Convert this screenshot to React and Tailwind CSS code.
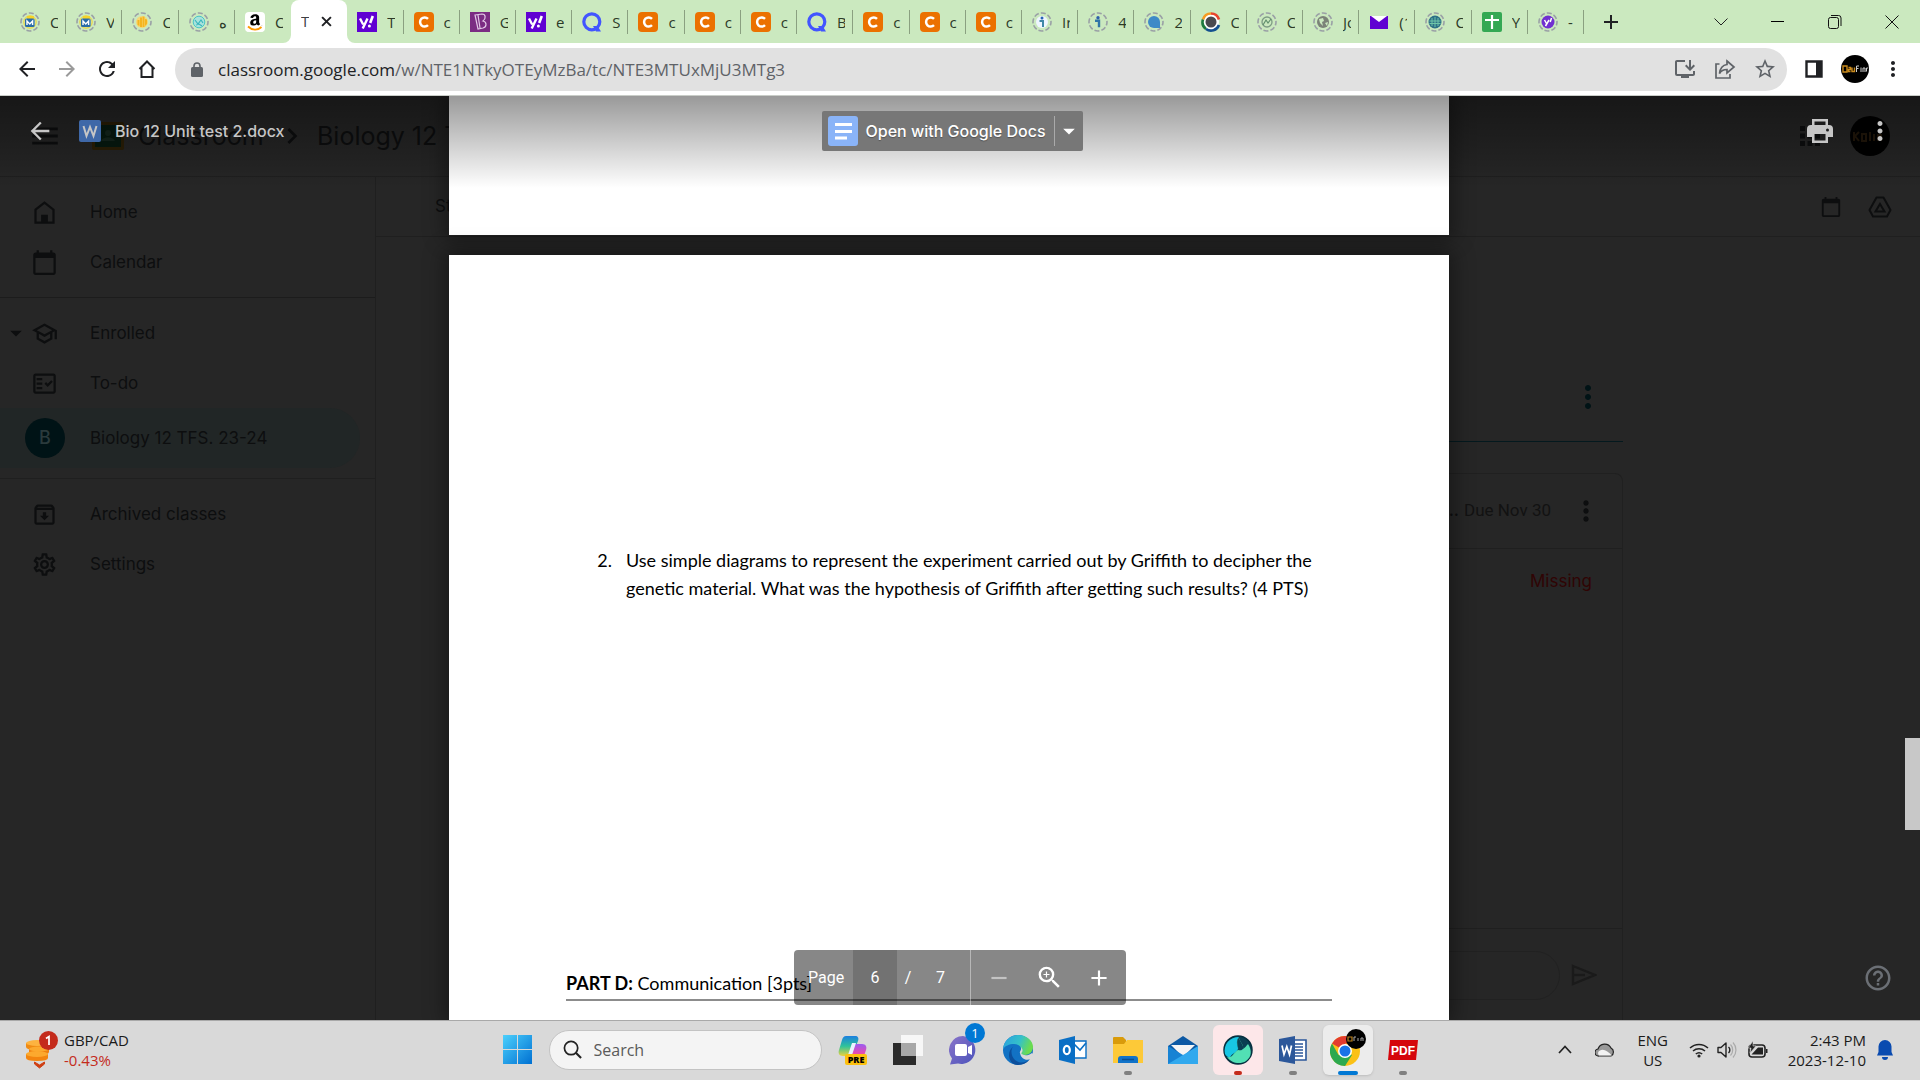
import React from "react";
import {
  MdArrowBack, MdArrowForward, MdRefresh, MdStarBorder, MdInstallDesktop, MdMoreVert,
  MdCalendarToday, MdOutlineSchool, MdOutlineFactCheck, MdOutlineArchive, MdOutlineSettings,
  MdArrowDropDown, MdApps, MdMenu, MdHelpOutline, MdZoomIn, MdAdd, MdRemove, MdChevronRight,
} from "react-icons/md";
import { FaAmazon } from "react-icons/fa";

/* ---------- Favicons ---------- */

function Ring({ children }) {
  return (
    <svg viewBox="0 0 20 20" className="size-5 shrink-0" aria-hidden="true">
      <circle cx="10" cy="10" r="9" fill="none" stroke="#9aa0a6" strokeWidth="1.6" strokeDasharray="5 2.07" strokeDashoffset="1.5" />
      {children}
    </svg>
  );
}

const favicons = {
  moodle: (
    <Ring>
      <path d="M7 4h7v3H7z" fill="#f5d327" />
      <circle cx="10" cy="10" r="6.2" fill="none" stroke="#f5d327" strokeWidth="1" />
      <rect x="5" y="6.5" width="9.6" height="8.5" rx="1.5" fill="#2a6ca8" />
      <path d="M7 13V9l2.8 3 2.8-3v4" fill="none" stroke="#fff" strokeWidth="1.4" />
    </Ring>
  ),
  hand: (
    <Ring>
      <circle cx="10" cy="10" r="6" fill="#f7d774" />
      <path d="M5.5 13V8h2v6zM8 15V5.5h2V15zM10.5 15V4.5h2V15zM13 14V7l2 .5V12z" fill="#f5b51f" />
    </Ring>
  ),
  teal: (
    <Ring>
      <circle cx="10" cy="10" r="5.8" fill="#a9e2dc" stroke="#49c5c5" strokeWidth="1" />
      <path d="M6 8l3 4 3-4 2 3M7 13l3-1 3 2" fill="none" stroke="#35b5bd" strokeWidth="1.1" />
    </Ring>
  ),
  amazon: (
    <span className="relative flex size-5 shrink-0 items-center justify-center rounded-sm bg-white">
      <FaAmazon className="size-[18px] text-black" />
      <svg viewBox="0 0 20 20" className="absolute inset-0 size-5"><path d="M2 13.5h16v6H2z" fill="#fff" /><path d="M3 14.5c4 4 10 4 13.5 .5" fill="none" stroke="#ff9900" strokeWidth="1.8" /></svg>
    </span>
  ),
  yahoo: (
    <svg viewBox="0 0 20 20" className="size-5 shrink-0"><path d="M0 0h20v20H0z" fill="#6001d2" /><path d="M3 6.5l3.2 6M10.5 6.5L5.7 16.5" stroke="#fff" strokeWidth="2.4" fill="none" /><path d="M15.8 4l-2.6 7" stroke="#fff" strokeWidth="2.6" /><circle cx="12.4" cy="14" r="1.5" fill="#fff" /></svg>
  ),
  chegg: (
    <svg viewBox="0 0 20 20" className="size-5 shrink-0"><rect width="20" height="20" rx="4" fill="#eb7100" /><path d="M14 6.8a4.6 4.6 0 1 0 0 6.4" fill="none" stroke="#fff" strokeWidth="2.5" /></svg>
  ),
  bar: (
    <svg viewBox="0 0 20 20" className="size-5 shrink-0"><path d="M0 0h20v20H0z" fill="#7b2c83" /><path d="M5 3l7-1c4 0 4 5 1 7 4 1 4 6 0 7l-5 1zM8 3l2 13" fill="none" stroke="#e3c9e8" strokeWidth="1.2" /></svg>
  ),
  quiz: (
    <svg viewBox="0 0 20 20" className="size-5 shrink-0"><circle cx="9.8" cy="9.8" r="8" fill="none" stroke="#4255ff" strokeWidth="3.2" /><path d="M11 14h4.5l3.5 5.5h-5z" fill="#4255ff" /></svg>
  ),
  infoA: (
    <Ring><circle cx="10" cy="10" r="6" fill="#eef5ff" /><circle cx="10" cy="6" r="1.5" fill="#2762b5" /><path d="M7.5 9h3.5v6" fill="none" stroke="#3f87a8" strokeWidth="2" /></Ring>
  ),
  infoB: (
    <Ring><circle cx="10" cy="5.8" r="1.7" fill="#2c5faa" /><path d="M7 8.8h4v6.5" fill="none" stroke="#3176a7" strokeWidth="2.4" /></Ring>
  ),
  blue: (<Ring><circle cx="10" cy="10" r="6" fill="#3d8ac7" /><path d="M10 10h6v6h-6z" fill="#3d8ac7" /></Ring>),
  color: (
    <svg viewBox="0 0 20 20" className="size-5 shrink-0"><circle cx="10" cy="10" r="8" fill="#fff" /><circle cx="10" cy="10" r="5.5" fill="#4a4a4f" /><path d="M10 1.5a8.5 8.5 0 0 1 8 6" fill="none" stroke="#e8452c" strokeWidth="2.6" /><path d="M10 1.5a8.5 8.5 0 0 0-8 6" fill="none" stroke="#f59b23" strokeWidth="2.6" /><path d="M2 7.5a8.5 8.5 0 0 0 3 9.5" fill="none" stroke="#1d7a3d" strokeWidth="2.6" /><path d="M5 17a8.5 8.5 0 0 0 13-4" fill="none" stroke="#14508f" strokeWidth="2.6" /></svg>
  ),
  pen: (<Ring><circle cx="10" cy="10" r="5" fill="none" stroke="#7d9c84" strokeWidth="1.3" /><path d="M6 13l3-5 2 3 3-4" fill="none" stroke="#5f8f6c" strokeWidth="1.2" /></Ring>),
  globe: (<Ring><circle cx="10" cy="10" r="6" fill="#7b8378" /><path d="M6 7l4-1 1 3-2 1 1 4-3-3zM12 11l3-1-1 4z" fill="#cbe9bf" /></Ring>),
  mail: (
    <svg viewBox="0 0 20 20" className="size-5 shrink-0"><path d="M1 4h18v13H1z" fill="#6001d2" /><path d="M2 4h16l-8 6z" fill="#fff" /></svg>
  ),
  cpr: (<Ring><circle cx="10" cy="10" r="6.5" fill="#2d7186" /><path d="M4.5 9h11M4.5 11.5h11M7 6v8M10 5v10M13 6v8" stroke="#6fc5a8" strokeWidth="1" /></Ring>),
  sheet: (
    <svg viewBox="0 0 20 20" className="size-5 shrink-0"><rect width="20" height="20" rx="2" fill="#34a853" /><path d="M10 3v14M3 8h14" stroke="#fff" strokeWidth="2.2" /></svg>
  ),
  ring: (<Ring><circle cx="10" cy="10" r="6.5" fill="#7130d1" /><path d="M6.5 8l2 3.5M11 8l-3.5 6M13.5 6l-1.3 4" stroke="#fff" strokeWidth="1.5" /></Ring>),
};

const tabsBefore = [["moodle", "C"], ["moodle", "V"], ["hand", "C"], ["teal", "ه"], ["amazon", "C"]];
const tabsAfter = [
  ["yahoo", "T"], ["chegg", "c"], ["bar", "G"], ["yahoo", "e"], ["quiz", "S"], ["chegg", "c"], ["chegg", "c"], ["chegg", "c"],
  ["quiz", "B"], ["chegg", "c"], ["chegg", "c"], ["chegg", "c"], ["infoA", "Ir"], ["infoB", "4"], ["blue", "2"], ["color", "C"],
  ["pen", "C"], ["globe", "Jo"], ["mail", "(1"], ["cpr", "C"], ["sheet", "Y"], ["ring", "-"],
];

function Tab({ icon, label, last }) {
  return (
    <button className={`flex h-6 min-w-0 grow basis-14 items-center gap-[10px] pl-[10px] ${last ? "" : "border-r border-[#8aa080]"}`}>
      {favicons[icon]}
      <span className="w-2 overflow-hidden whitespace-nowrap text-left text-[15px] leading-5 text-[#2c3a28]">{label}</span>
    </button>
  );
}

function Avatar({ size }) {
  return (
    <svg viewBox="0 0 28 28" className={size} aria-hidden="true">
      <circle cx="14" cy="14" r="14" fill="#000" />
      <path d="M2 11h4v6H2zM7.500 12.500h2v2h-2v2h2M11 12.500v4h2.500v-4" fill="none" stroke="#c98a1c" strokeWidth="1.400" />
      <path d="M15.500 17v-6h2.500M15.500 13.500h2M20 12.500V17M22 17v-4h2v4M27 13h-1.500v3.500" fill="none" stroke="#cfcfcf" strokeWidth="1" />
    </svg>
  );
}

function TabStrip() {
  return (
    <div className="flex h-[43px] items-center bg-[#cbe9bf]">
      <nav aria-label="Tabs" className="ml-[10px] flex h-full max-w-[1574px] flex-1 items-center">
        {tabsBefore.map(([i, l], k) => <Tab key={k} icon={i} label={l} last={k === 4} />)}
        <div className="relative flex h-full min-w-0 grow basis-14 items-center justify-between rounded-t-lg bg-white pl-[10px] pr-[15px]">
          <svg viewBox="0 0 8 8" className="absolute bottom-0 right-full size-2" aria-hidden="true"><path d="M8 0v8H0a8 8 0 0 0 8-8" fill="#fff" /></svg>
          <svg viewBox="0 0 8 8" className="absolute bottom-0 left-full size-2" aria-hidden="true"><path d="M0 0v8h8a8 8 0 0 1-8-8" fill="#fff" /></svg>
          <span className="w-2 overflow-hidden text-[15px] text-[#3c4043]">T</span>
          <button aria-label="Close tab">
            <svg viewBox="0 0 10 10" className="size-[11px]"><path d="M1 1l8 8M9 1l-8 8" stroke="#202124" strokeWidth="1.8" /></svg>
          </button>
        </div>
        {tabsAfter.map(([i, l], k) => <Tab key={k} icon={i} label={l} />)}
      </nav>
      <button aria-label="New tab" className="ml-[15px]"><MdAdd className="size-6 text-[#202124]" /></button>
      <div className="ml-auto flex h-9 items-center">
        <button aria-label="Search tabs" className="flex w-[57px] justify-center"><svg viewBox="0 0 14 8" className="h-2 w-[14px]"><path d="M.5 .5L7 7l6.5-6.5" fill="none" stroke="#222" /></svg></button>
        <button aria-label="Minimize" className="flex w-[57px] justify-center"><span className="h-px w-[13px] bg-black" /></button>
        <button aria-label="Restore" className="flex w-[57px] justify-center"><svg viewBox="0 0 14 14" className="size-[14px]"><rect x=".5" y="2.5" width="10" height="11" rx="2" fill="none" stroke="#111" /><path d="M3 .5h7.5a2.5 2.5 0 0 1 2.5 2.5v8" fill="none" stroke="#111" /></svg></button>
        <button aria-label="Close" className="flex w-[57px] justify-center"><svg viewBox="0 0 14 14" className="size-[14px]"><path d="M.5 .5l13 13M13.5 .5l-13 13" stroke="#111" /></svg></button>
      </div>
    </div>
  );
}

function AddressBar() {
  return (
    <div className="flex h-[53px] items-center border-b border-[#c9cdc8] bg-white px-[15px] text-[#202124]">
      <div className="flex items-center gap-4">
        <button aria-label="Back"><MdArrowBack className="size-6" /></button>
        <button aria-label="Forward"><MdArrowForward className="size-6 text-[#9a9a9a]" /></button>
        <button aria-label="Reload"><MdRefresh className="size-6" /></button>
        <button aria-label="Home"><svg viewBox="0 0 24 24" className="size-6"><path d="M4.500 12L12 4.500l7.500 7.500M6.500 10.500V20h11v-9.500" fill="none" stroke="currentColor" strokeWidth="2" /></svg></button>
      </div>
      <div className="ml-4 flex h-[43px] flex-1 items-center rounded-full bg-[#e1e1e1] pl-4 pr-[10px] text-[#5f6368]">
        <svg viewBox="0 0 12 15" className="h-[15px] w-3" aria-hidden="true"><rect y="5" width="12" height="10" rx="1.500" fill="currentColor" /><path d="M3 6V4a3 3 0 0 1 6 0v2" fill="none" stroke="currentColor" strokeWidth="1.600" /></svg>
        <div className="ml-[15px] flex-1 pt-px text-[17px] leading-6">
          <span className="text-[#202124]">classroom.google.com</span>/w/NTE1NTkyOTEyMzBa/tc/NTE3MTUxMjU3MTg3
        </div>
        <div className="flex items-center gap-4">
          <button aria-label="Install"><MdInstallDesktop className="size-6" /></button>
          <button aria-label="Share"><svg viewBox="0 0 24 24" className="size-6"><path d="M6.500 7H3v14h14v-4" fill="none" stroke="currentColor" strokeWidth="1.700" /><path d="M14 4l7 6-7 6v-3.500c-4 0-6 1.200-7.500 4C7 12 9 8.200 14 7.500z" fill="none" stroke="currentColor" strokeWidth="1.700" /></svg></button>
          <button aria-label="Bookmark"><MdStarBorder className="size-6" /></button>
        </div>
      </div>
      <div className="ml-[18px] flex items-center gap-3">
        <button aria-label="Side panel"><svg viewBox="0 0 18 18" className="size-[18px]"><path d="M1.500 1.500h15v15h-15z" fill="none" stroke="#202124" strokeWidth="2.400" /><path d="M11 1h6v16h-6z" fill="#202124" /></svg></button>
        <button aria-label="Profile" className="ml-[6px]"><Avatar size="size-7" /></button>
        <button aria-label="Menu"><MdMoreVert className="size-6" /></button>
      </div>
    </div>
  );
}

/* ---------- Classroom page behind the viewer ---------- */

function HomeIcon({ className }) {
  return (
    <svg viewBox="0 0 24 24" className={className} aria-hidden="true">
      <path d="M4 9.500L12 3.300l8 6.200V21H4z" fill="none" stroke="currentColor" strokeWidth="2" />
      <path d="M9 14h6v7H9z" fill="currentColor" />
    </svg>
  );
}

function SendIcon({ className }) {
  return (
    <svg viewBox="0 0 26 22" className={className} aria-hidden="true">
      <path d="M2 2l22 9-22 9z" fill="none" stroke="currentColor" strokeWidth="2.400" />
      <path d="M2 11h12" stroke="currentColor" strokeWidth="2.400" />
    </svg>
  );
}

function NavItem({ icon: Icon, label, caret }) {
  return (
    <a href="#" className="flex h-[50px] items-center">
      <span className="flex w-[31px] justify-center">{caret && <MdArrowDropDown className="size-7" />}</span>
      <Icon className="size-[27px]" />
      <span className="ml-8">{label}</span>
    </a>
  );
}

function DriveIcon() {
  return (
    <svg viewBox="0 0 24 24" className="size-6" aria-hidden="true">
      <path d="M8.500 2.500h7L22.500 15l-3.500 6.500H5L1.500 15z" fill="none" stroke="currentColor" strokeWidth="2" strokeLinejoin="round" />
      <path d="M12 9l4.500 7.500h-9z" fill="none" stroke="currentColor" strokeWidth="2" />
    </svg>
  );
}

function Classroom() {
  return (
    <div className="flex min-h-0 flex-1 flex-col bg-[#262626] font-['Inter',sans-serif] text-[#0d0e0f]">
      <header className="flex h-[81px] shrink-0 items-center border-b border-[#1f1f1f] pl-7 pr-[30px] text-[25px] leading-8">
        <MdMenu className="size-[34px]" />
        <svg viewBox="0 0 32 28" className="ml-[30px] h-7 w-8"><rect width="32" height="28" rx="2" fill="#2b1f06" /><path d="M3 3h26v22H3z" fill="#061a10" /><circle cx="16" cy="11" r="3" fill="#15271e" /><path d="M9 19c2-5 12-5 14 0z" fill="#15271e" /></svg>
        <span className="ml-[14px] w-[130px] whitespace-nowrap">Classroom</span>
        <MdChevronRight className="ml-2 size-8" />
        <span className="ml-[9px] whitespace-nowrap">Biology 12 TFS. 23-24</span>
        <MdApps className="ml-auto size-[30px]" />
        <svg viewBox="0 0 40 40" className="ml-[25px] size-10"><circle cx="20" cy="20" r="20" fill="#000" /><path d="M4 16v9M9 16l-4 4 4 5M12 18h4v7h-4zM20 16v9M24 18v7M28 25v-6h3v6" fill="none" stroke="#22170a" strokeWidth="2" /></svg>
      </header>
      <div className="flex min-h-0 flex-1">
        <nav aria-label="Classroom" className="w-[376px] shrink-0 border-r border-[#1f1f1f] text-[17px] leading-6">
          <div className="border-b border-[#1c1c1c] py-[10px]">
            <NavItem icon={HomeIcon} label="Home" />
            <NavItem icon={MdCalendarToday} label="Calendar" />
          </div>
          <div className="border-b border-[#1f1f1f] py-[10px]">
            <NavItem icon={MdOutlineSchool} label="Enrolled" caret />
            <NavItem icon={MdOutlineFactCheck} label="To-do" />
            <a href="#" className="mr-[15px] flex h-[60px] items-center rounded-r-full bg-[#212626] pl-[25px]">
              <span className="flex size-10 items-center justify-center rounded-full bg-[#001316] text-[18px] font-medium text-[#2a3a3c]">B</span>
              <span className="ml-[25px]">Biology 12 TFS. 23-24</span>
            </a>
          </div>
          <div className="py-[10px]">
            <NavItem icon={MdOutlineArchive} label="Archived classes" />
            <NavItem icon={MdOutlineSettings} label="Settings" />
          </div>
        </nav>
        <div className="flex min-w-0 flex-1 flex-col">
          <div className="flex h-[60px] shrink-0 items-center gap-[26px] border-b border-[#1f1f1f] pl-[59px] pr-7 text-[17px]">
            <span className="mr-auto">Stream</span>
            <MdCalendarToday className="size-[22px]" />
            <DriveIcon />
          </div>
          <div className="flex min-h-0 flex-1 justify-center overflow-hidden pr-4">
            <section className="flex w-[966px] flex-col">
              <div className="flex h-[205px] shrink-0 justify-end border-b border-[#04191e] pr-[17px] pt-[142px]">
                <MdMoreVert className="size-9 text-[#001316]" />
              </div>
              <article className="mt-[31px] flex flex-1 flex-col rounded-t-lg border border-b-0 border-[#202020]">
                <div className="flex h-[75px] items-center justify-end border-b border-[#1f1f1f] pr-5">
                  <span className="text-[17px] font-medium">Bio 12 Unit test paper...</span>
                  <span className="ml-[5px] font-['Roboto',sans-serif] text-[17px] text-[#121212]">Due Nov 30</span>
                  <MdMoreVert className="ml-[19px] size-8" />
                </div>
                <p className="flex-1 pr-[30px] pt-5 text-right text-[17px] leading-6 text-[#300404]">Missing</p>
                <div className="flex h-[92px] items-start border-t border-[#1f1f1f] pr-[25px] pt-[22px]">
                  <div className="h-[49px] flex-1 rounded-full border border-[#212121]" />
                  <SendIcon className="ml-[11px] mt-[13px] h-[22px] w-[26px] text-[#1a1a1a]" />
                </div>
              </article>
            </section>
          </div>
        </div>
      </div>
    </div>
  );
}

/* ---------- Document viewer ---------- */

function PrintIcon({ className }) {
  return (
    <svg viewBox="0 0 26 24" className={className} aria-hidden="true">
      <path fillRule="evenodd" d="M5 0h16v6h1a4 4 0 0 1 4 4v8h-5v6H5v-6H0v-8a4 4 0 0 1 4-4h1zM7.500 2.500V6h11V2.500zM7.500 15v6.500h11V15zM20.500 9.500a1.500 1.500 0 1 0 0 3 1.500 1.500 0 0 0 0-3z" fill="currentColor" />
    </svg>
  );
}

function Viewer() {
  return (
    <div className="absolute inset-0 flex flex-col">
      <div className="flex min-h-0 flex-1 flex-col items-center gap-5 overflow-hidden pr-[22px] font-['Lato',sans-serif] text-[18px] leading-7 text-black">
        <div className="h-[139px] w-[1000px] shrink-0 bg-white shadow-[0_0_20px_4px_rgba(0,0,0,0.4)]" />
        <div className="flex w-[1000px] flex-1 flex-col bg-white px-[117px] shadow-[0_0_20px_4px_rgba(0,0,0,0.4)]">
          <ol start="2" className="ml-[60px] mt-[291px] list-none">
            <li className="relative whitespace-nowrap">
              <span className="absolute right-full mr-[14px]">2.</span>
              Use simple diagrams to represent the experiment carried out by Griffith to decipher the
              <br />
              genetic material. What was the hypothesis of Griffith after getting such results? (4 PTS)
            </li>
          </ol>
          <h2 className="mb-[19px] mt-auto border-b-2 border-[#8c8c8c] pb-[2px] font-normal"><b>PART D:</b> Communication [3pts]</h2>
        </div>
      </div>

      <div className="absolute inset-x-0 top-0 grid h-[92px] grid-cols-[1fr_auto_1fr] items-start bg-linear-to-b from-black/40 to-transparent pr-[15px] pt-[15px] font-['Inter',sans-serif] text-[#c6c6c6]">
        <div className="flex h-10 items-center pl-[26px]">
          <button aria-label="Close viewer"><MdArrowBack className="size-7" /></button>
          <svg viewBox="0 0 22 22" className="ml-[25px] size-[22px]"><rect width="22" height="22" rx="2" fill="#3f68a8" /><path d="M4.500 6l3 10L11 7l3.500 9 3-10" fill="none" stroke="#c6c6c6" strokeWidth="2" /></svg>
          <span className="ml-[14px] text-[16px] font-medium leading-6">Bio 12 Unit test 2.docx</span>
        </div>
        <div className="flex h-10 items-center rounded-xs bg-[#777] text-white">
          <button className="flex items-center gap-[7px] pl-[6px]">
            <svg viewBox="0 0 30 30" className="size-[30px]"><rect width="30" height="30" rx="3" fill="#8ab4f8" /><path d="M7 8.500h17M7 15.500h17M7 22h12" stroke="#fff" strokeWidth="3" /></svg>
            <span className="text-[16px] font-medium leading-6 [text-shadow:0_1px_1px_rgba(0,0,0,0.3)]">Open with Google Docs</span>
          </button>
          <span className="ml-2 h-[30px] w-px bg-[#aaa]" />
          <button aria-label="Choose app"><MdArrowDropDown className="size-7" /></button>
        </div>
        <div className="flex h-10 items-center justify-end gap-8 pr-[10px]">
          <button aria-label="Print"><PrintIcon className="h-6 w-[26px]" /></button>
          <button aria-label="More actions"><MdMoreVert className="size-[30px]" /></button>
        </div>
      </div>

      <div className="pointer-events-none absolute inset-x-0 bottom-[15px] flex justify-center font-['Roboto',sans-serif] text-white">
        <div className="flex h-[55px] items-center rounded-sm bg-black/47 text-[16px]">
          <label htmlFor="page" className="w-[59px] pl-[14px]">Page</label>
          <input id="page" defaultValue="6" className="h-full w-11 bg-black/15 text-center" />
          <span className="w-[22px] text-center">/</span>
          <span className="w-[51px] pl-[17px]">7</span>
          <span className="h-full w-px bg-white/40" />
          <button aria-label="Zoom out" className="flex w-[56px] justify-center text-white/50"><MdRemove className="size-[26px]" /></button>
          <button aria-label="Fit" className="flex w-11 justify-center"><MdZoomIn className="size-[29px]" /></button>
          <button aria-label="Zoom in" className="flex w-[55px] justify-center"><MdAdd className="size-[26px]" /></button>
        </div>
      </div>
      <button aria-label="Help" className="absolute bottom-[27px] right-[27px] text-[#6b6f75]"><MdHelpOutline className="size-[30px]" /></button>
      <div className="absolute right-0 top-[69.5%] h-[92px] w-[15px] bg-[#c8c8c8]" />
    </div>
  );
}

/* ---------- Taskbar ---------- */

const apps = [
  { name: "Copilot", art: (
    <svg viewBox="0 0 30 32" className="h-8 w-[30px]"><defs><linearGradient id="cpa" x1="0" y1="0" x2="0" y2="1"><stop stopColor="#1b7fe0" /><stop offset=".5" stopColor="#2fc39a" /><stop offset="1" stopColor="#f3d33b" /></linearGradient><linearGradient id="cpb" x1="0" y1="0" x2="0" y2="1"><stop stopColor="#9a5cf0" /><stop offset=".6" stopColor="#e84bb0" /><stop offset="1" stopColor="#f58a4a" /></linearGradient></defs><path d="M8 2h9c3 0 4 2 3 5l-5 13c-1 2-3 3-5 2H5c-4 0-5-3-4-6L4 6c1-3 2-4 4-4z" fill="url(#cpa)" /><path d="M17 10h7c4 0 5 3 4 6l-2 6c-1 3-3 4-5 4h-9z" fill="url(#cpb)" /><path d="M14 9h4l-4 12h-4z" fill="#e9f2ff" /><rect x="7" y="20" width="22" height="11" rx="2" fill="#fcc10f" /><text x="18" y="29" textAnchor="middle" fontSize="9" fontWeight="800" fontFamily="Open Sans">PRE</text></svg>) },
  { name: "Task view", art: (
    <svg viewBox="0 0 30 30" className="size-[30px]"><path d="M0 8h23v22H0z" fill="#2b2b2b" /><path d="M8 0h22v21H8z" fill="#fff" opacity=".78" /><path d="M8 8h15v13H8z" fill="#a8a8a8" /></svg>) },
  { name: "Chat", badge: "1", art: (
    <svg viewBox="0 0 28 30" className="h-[30px] w-7"><defs><linearGradient id="cht" x1="0" y1="0" x2="1" y2="1"><stop stopColor="#8a74c9" /><stop offset="1" stopColor="#4b53bc" /></linearGradient></defs><path d="M14 1a14 14 0 1 1-5 27.500l-8 1 2-6A14 14 0 0 1 14 1z" fill="url(#cht)" /><rect x="6" y="9" width="12" height="12" rx="2" fill="#fff" /><path d="M19 12l4-2v10l-4-2z" fill="#fff" /></svg>) },
  { name: "Edge", art: (
    <svg viewBox="0 0 30 30" className="size-[30px]"><defs><linearGradient id="eda" x1="0" y1="0" x2="1" y2=".3"><stop stopColor="#2a9fe0" /><stop offset=".6" stopColor="#35c1c9" /><stop offset="1" stopColor="#6bdc4f" /></linearGradient></defs><circle cx="15" cy="15" r="15" fill="#1272c4" /><path d="M0 14C1 5 8 0 15 0c9 0 15 6 15 12 0 5-4 8-8 8-3 0-5-1-5-2s2-2 1-5c-1-3-4-4-7-4-5 0-9 2-11 5z" fill="url(#eda)" /><path d="M11 11c-4 3-3 10 1 14 5 4 11 3 15-1-2 3-7 6-12 6-6 0-9-5-9-10 0-4 2-7 5-9z" fill="#0c4f9c" /><path d="M17 18c-1-1 2-3 1-6 2 2 2 5 0 6 1 2 6 4 11 0l3 3-4 3c-5 2-10 0-11-6z" fill="#d9d9d9" /></svg>) },
  { name: "Outlook", art: (
    <svg viewBox="0 0 28 28" className="size-7"><path d="M13 5h14v17H13z" fill="#fff" stroke="#0a6fc5" strokeWidth="1.400" /><path d="M14 7l7 7 6-7" fill="none" stroke="#0a6fc5" strokeWidth="1.600" /><path d="M0 4l16-4v28L0 24z" fill="#0a6fc5" /><ellipse cx="7.800" cy="14" rx="3" ry="4.200" fill="none" stroke="#fff" strokeWidth="2.200" /></svg>) },
  { name: "Files", dot: "bg-[#808080]", wide: "w-2", art: (
    <svg viewBox="0 0 30 28" className="h-7 w-[30px]"><path d="M0 2q0-1 1-1h9l3 3v6H0z" fill="#d99b0b" /><path d="M0 8h11l3-4h16v23H0z" fill="#fdc938" /><path d="M5 27v-4q0-3 3-3h14q3 0 3 3v4z" fill="#1173c9" /><path d="M9 23.500h12" stroke="#0a4f91" strokeWidth="1.500" /></svg>) },
  { name: "Mail", art: (
    <svg viewBox="0 0 30 28" className="h-7 w-[30px]"><path d="M0 10L15 0l15 10v18H0z" fill="#0c59a4" /><path d="M3 9h24L15 21z" fill="#f4f4f4" /><path d="M0 10l30 18H0z" fill="#1783d4" /><path d="M30 10v18H0z" fill="#31a9ee" /></svg>) },
  { name: "GitKraken", tile: "bg-[#fde7e9]", dot: "bg-[#c42b1c]", wide: "w-2", art: (
    <svg viewBox="0 0 30 30" className="size-[30px]"><circle cx="15" cy="15" r="14" fill="#0a3f52" stroke="#06303f" strokeWidth="1.500" /><path d="M2 19C0 9 7 2 16 2c-4 5-1 8-1 12-2 5-7 4-8 9-2-1-4-2-5-4z" fill="#18c5e3" /><path d="M4 22c5 2 7-5 11-7 1-5-3-8 1-12 1 4 5 7 4 11 2-1 3-3 5-5 4 6 4 13-2 17-6 4-15 2-19-4z" fill="#52e0b4" /><path d="M15 15c2 0 3 1 5-1 1-4-3-7-4-11-4 4 0 7-1 12z" fill="#0a3f52" /></svg>) },
  { name: "Word", dot: "bg-[#808080]", wide: "w-2", art: (
    <svg viewBox="0 0 28 28" className="size-7"><path d="M14 4h13v20H14z" fill="#fff" stroke="#2b579a" strokeWidth="1.600" /><path d="M15 8h9M15 11h9M15 14h9M15 17h9M15 20h9" stroke="#2b579a" strokeWidth="1.400" /><path d="M0 3l16-3v28L0 25z" fill="#2b579a" /><path d="M3 9.500l2 9 2.800-8 2.700 8 2-9" fill="none" stroke="#fff" strokeWidth="1.700" /></svg>) },
  { name: "Chrome", tile: "bg-[#ececec] shadow-sm", dot: "bg-[#0078d4]", wide: "w-5", art: (
    <svg viewBox="0 0 36 38" className="-mt-1 h-[38px] w-9"><circle cx="15" cy="22" r="15" fill="#fbc116" /><path d="M15 22L2 14.500A15 15 0 0 1 28 14.500H15z" fill="#e33b2e" /><path d="M15 22l-6.500 4L2 14.500A15 15 0 0 0 15 37l7-11z" fill="#2da94f" /><circle cx="15" cy="22" r="7" fill="#fff" /><circle cx="15" cy="22" r="5.500" fill="#1a73e8" /><circle cx="26" cy="10" r="10" fill="#000" /><path d="M18 8h4v4h-4z" fill="none" stroke="#b9801c" strokeWidth="1.200" /><path d="M24 12V8h2M28 9v3M31 12V9h2v3" fill="none" stroke="#a8a8a8" /></svg>) },
  { name: "PDF", dot: "bg-[#808080]", wide: "w-2", art: (
    <svg viewBox="0 0 30 20" className="h-5 w-[30px]"><path d="M2 0h28l-2 20H0z" fill="#d5060b" /><text x="15" y="14.500" textAnchor="middle" fill="#fff" fontSize="12" fontWeight="700" fontFamily="Liberation Sans">PDF</text></svg>) },
];

function Taskbar() {
  return (
    <footer className="grid h-[60px] shrink-0 grid-cols-[1fr_auto_1fr] items-center border-t border-[#a9a9a9] bg-[#d9d9d9] pb-0.5 text-[15px] leading-5 text-[#1b1b1b]">
      <button className="flex items-center gap-[6px] pl-[26px] text-left">
        <svg viewBox="0 0 32 38" className="h-[38px] w-8">
          <path d="M0 12v4q0 3 11 3t11-3v-4z" fill="#f08a12" /><ellipse cx="11" cy="12" rx="11" ry="3" fill="#fdb340" />
          <path d="M3 18v3q0 3 10 3t10-3v-3z" fill="#ef8010" /><ellipse cx="13" cy="18" rx="10" ry="2.500" fill="#fca92e" />
          <path d="M0 23v4q0 3 11 3t11-3v-4z" fill="#f3850f" /><ellipse cx="11" cy="23" rx="11" ry="3" fill="#fca92e" />
          <path d="M8.500 31l5 3 5-3v2l-5 4-5-4z" fill="#cf3f14" stroke="#cf3f14" />
          <circle cx="22.500" cy="9.500" r="9.500" fill="#c42b1c" /><path d="M20 7.500l3-2V14" fill="none" stroke="#fff" strokeWidth="1.700" />
        </svg>
        <span>GBP/CAD<br /><span className="text-[#c42b1c]">-0.43%</span></span>
      </button>
      <div className="flex items-center">
        <button aria-label="Start" className="flex w-[55px] justify-center">
          <svg viewBox="0 0 29 29" className="size-[29px]"><defs><linearGradient id="win" x1="0" y1="0" x2="1" y2="1"><stop stopColor="#4cd0fc" /><stop offset="1" stopColor="#0070d2" /></linearGradient></defs><path d="M0 0h14v14H0zM15 0h14v14H15zM0 15h14v14H0zM15 15h14v14H15z" fill="url(#win)" /></svg>
        </button>
        <label className="mx-1 flex h-10 w-[273px] items-center rounded-full border border-[#c3c3c3] bg-[#f4f4f4] pl-[13px]">
          <svg viewBox="0 0 20 20" className="size-[19px]"><circle cx="8.500" cy="8.500" r="7" fill="none" stroke="#222" strokeWidth="1.800" /><path d="M13.500 13.500L19 19" stroke="#222" strokeWidth="2.200" /></svg>
          <input aria-label="Search" placeholder="Search" className="ml-3 w-40 bg-transparent text-[16px] placeholder:text-[#5a5a5a]" />
        </label>
        {apps.map((a) => (
          <button key={a.name} aria-label={a.name} className="flex w-[55px] justify-center">
            <span className={`relative flex size-[50px] items-center justify-center rounded-md ${a.tile || ""}`}>
              {a.art}
              {a.badge && <span className="absolute -top-0.5 right-[3px] flex size-5 items-center justify-center rounded-full bg-[#0078d4] text-[13px] text-white">{a.badge}</span>}
              {a.dot && <span className={`absolute bottom-0 h-1 rounded-full ${a.dot} ${a.wide}`} />}
            </span>
          </button>
        ))}
      </div>
      <div className="flex items-center justify-end pr-[27px]">
        <button aria-label="Hidden icons" className="mr-[23px]"><svg viewBox="0 0 14 9" className="h-[9px] w-[14px]"><path d="M1 8l6-6.500L13 8" fill="none" stroke="#222" strokeWidth="1.700" /></svg></button>
        <svg viewBox="0 0 20 15" className="mr-[22px] h-[15px] w-5"><path d="M4 14a3.500 3.500 0 0 1-1-7 7 7 0 0 1 13-1 4.500 4.500 0 0 1 0 8z" fill="#999" stroke="#222" strokeWidth="1.200" /><path d="M4 13.500a3 3 0 0 1 1-5c4-2 8 1 12 5z" fill="#f2f2f2" /></svg>
        <span className="mr-5 w-8 text-center">ENG<br />US</span>
        <svg viewBox="0 0 20 16" className="mr-2 h-4 w-5"><path d="M1 6a13 13 0 0 1 18 0M4 9a9 9 0 0 1 12 0M6.800 12a5 5 0 0 1 6.400 0" fill="none" stroke="#222" strokeWidth="1.500" /><circle cx="10" cy="14" r="1.600" fill="#222" /></svg>
        <svg viewBox="0 0 20 18" className="mr-[11px] h-[18px] w-5"><path d="M1 6.500h3L9 2v14l-5-4.500H1z" fill="none" stroke="#222" strokeWidth="1.400" strokeLinejoin="round" /><path d="M11.500 6a4 4 0 0 1 0 6" fill="none" stroke="#222" strokeWidth="1.400" /><path d="M13.500 3.500a8 8 0 0 1 0 11M16 1.500a11 11 0 0 1 0 15" fill="none" stroke="#aaa" strokeWidth="1.200" /></svg>
        <svg viewBox="0 0 20 18" className="mr-5 h-[18px] w-5"><rect x="1" y="4" width="16" height="12" rx="3" fill="none" stroke="#222" strokeWidth="1.600" /><path d="M3.500 13.500L10 6.500h5v7zM18 8h1.500v4H18z" fill="#222" /><path d="M5 0L0 7h3l-1 5 6-7H5z" fill="#222" stroke="#d9d9d9" strokeWidth=".6" /></svg>
        <span className="mr-[11px] text-right">2:43 PM<br />2023-12-10</span>
        <svg viewBox="0 0 16 20" className="h-5 w-4"><path d="M8 0a6.500 6.500 0 0 1 6.500 6.500V12l1.500 3.500H0L1.500 12V6.500A6.500 6.500 0 0 1 8 0zM5 17h6a3 3 0 0 1-6 0z" fill="#0a4bb0" /></svg>
      </div>
    </footer>
  );
}

export default function App() {
  return (
    <div className="flex h-screen flex-col overflow-hidden font-['Open_Sans','Noto_Sans',sans-serif]">
      <TabStrip />
      <AddressBar />
      <main className="relative flex min-h-0 flex-1 flex-col">
        <Classroom />
        <Viewer />
      </main>
      <Taskbar />
    </div>
  );
}
